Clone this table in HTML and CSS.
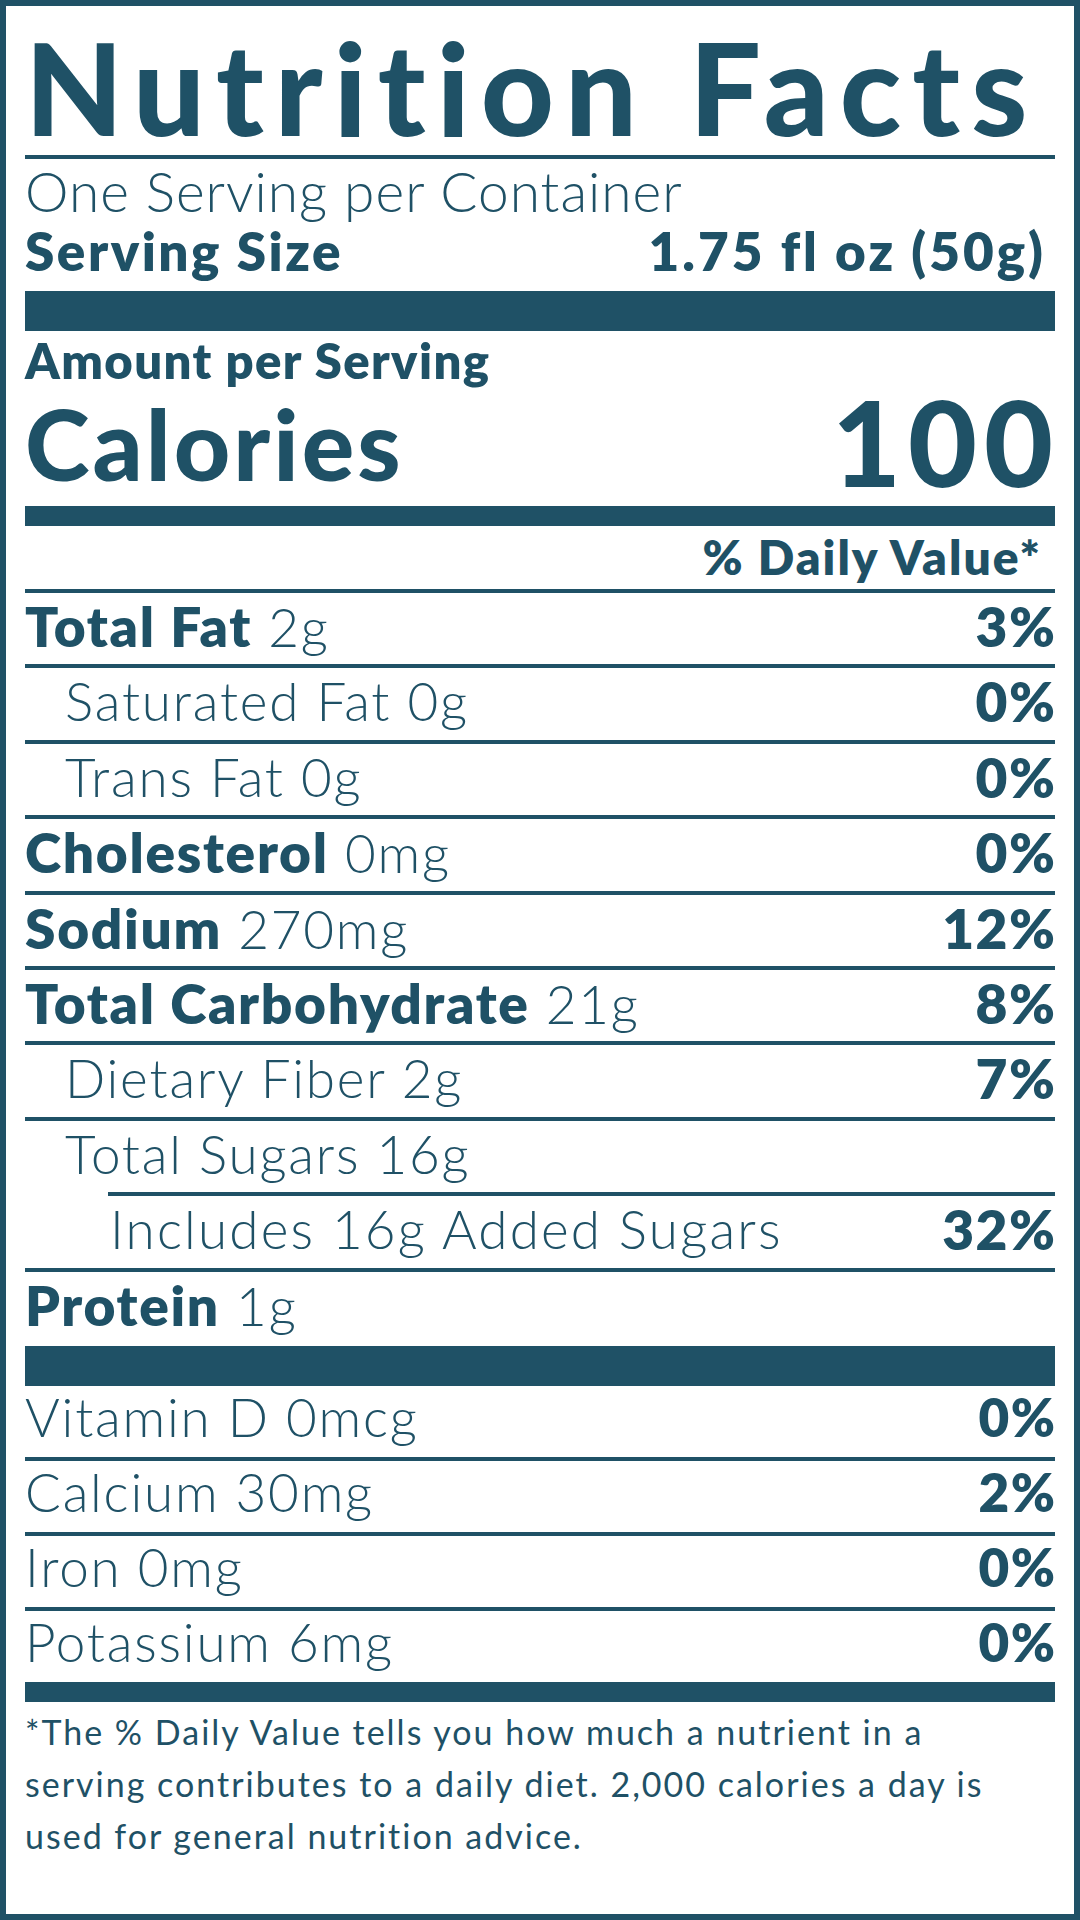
FILE: index.html
```html
<!DOCTYPE html>
<html lang="en">
<head>
<meta charset="utf-8">
<title>Nutrition Facts</title>
<link rel="stylesheet" href="styles.css">
</head>
<body>
<div class="label">
  <h1 class="title">Nutrition Facts</h1>
  <div class="servings">One Serving per Container</div>
  <div class="serving-size"><span>Serving Size</span><span class="ss-val">1.75 fl oz (50g)</span></div>
  <div class="bar bar-thick"></div>
  <div class="amount">Amount per Serving</div>
  <div class="calories"><span class="cal-label">Calories</span><span class="cal-num">100</span></div>
  <div class="bar bar-med"></div>
  <div class="dv-head">% Daily Value*</div>

  <div class="row"><span class="name"><b>Total Fat</b> 2g</span><b class="pct">3%</b></div>
  <div class="row indent"><span class="name">Saturated Fat 0g</span><b class="pct">0%</b></div>
  <div class="row indent"><span class="name">Trans Fat 0g</span><b class="pct">0%</b></div>
  <div class="row"><span class="name"><b>Cholesterol</b> 0mg</span><b class="pct">0%</b></div>
  <div class="row"><span class="name"><b>Sodium</b> 270mg</span><b class="pct">12%</b></div>
  <div class="row"><span class="name"><b>Total Carbohydrate</b> 21g</span><b class="pct">8%</b></div>
  <div class="row indent"><span class="name">Dietary Fiber 2g</span><b class="pct">7%</b></div>
  <div class="row indent no-rule"><span class="name">Total Sugars 16g</span></div>
  <div class="row added"><span class="name">Includes 16g Added Sugars</span><b class="pct">32%</b></div>
  <div class="row protein"><span class="name"><b>Protein</b> 1g</span></div>
  <div class="bar bar-thick"></div>

  <div class="vrow"><span class="name">Vitamin D 0mcg</span><b class="pct">0%</b></div>
  <div class="vrow"><span class="name">Calcium 30mg</span><b class="pct">2%</b></div>
  <div class="vrow"><span class="name">Iron 0mg</span><b class="pct">0%</b></div>
  <div class="vrow last"><span class="name">Potassium 6mg</span><b class="pct">0%</b></div>
  <div class="bar bar-med"></div>

  <p class="foot">*The % Daily Value tells you how much a nutrient in a<br>serving contributes to a daily diet. 2,000 calories a day is<br>used for general nutrition advice.</p>
</div>
</body>
</html>
```

FILE: styles.css
```css
html, body {
  margin: 0;
  padding: 0;
  background: #ffffff;
}

.label {
  box-sizing: border-box;
  width: 1080px;
  height: 1920px;
  border: 6px solid #1f5166;
  padding: 0 19px;
  color: #1f5166;
  font-family: "Lato", "Noto Sans", sans-serif;
  overflow: hidden;
}

.title {
  margin: 0;
  padding-top: 13px;
  height: 136px;
  line-height: 136px;
  font-size: 127px;
  font-weight: 900;
  letter-spacing: 11px;
  white-space: nowrap;
  border-bottom: 4px solid #1f5166;
}

.servings {
  height: 64px;
  line-height: 64px;
  font-size: 55px;
  font-weight: 300;
  letter-spacing: 1px;
  white-space: nowrap;
}

.serving-size {
  display: flex;
  justify-content: space-between;
  height: 55px;
  line-height: 55px;
  padding: 0 12px 13px 0;
  font-size: 53px;
  font-weight: 800;
  letter-spacing: 2.5px;
  white-space: nowrap;
}
.ss-val {
  letter-spacing: 3px;
  margin-right: -3px;
}

.bar {
  background: #1f5166;
}
.bar-thick { height: 40px; }
.bar-med { height: 20px; }

.amount {
  height: 58px;
  line-height: 58px;
  font-size: 49px;
  font-weight: 800;
  letter-spacing: 1.4px;
  white-space: nowrap;
}

.calories {
  display: flex;
  justify-content: space-between;
  align-items: flex-start;
  height: 117px;
  font-weight: 900;
  white-space: nowrap;
}
.cal-label {
  font-size: 98px;
  line-height: 108px;
  letter-spacing: 3px;
}
.cal-num {
  font-size: 119px;
  line-height: 104px;
  letter-spacing: 7px;
  margin-right: -5px;
}

.dv-head {
  height: 61px;
  line-height: 61px;
  padding: 0 13px 2px 0;
  text-align: right;
  font-size: 48px;
  font-weight: 800;
  letter-spacing: 2px;
  border-bottom: 4px solid #1f5166;
  white-space: nowrap;
}

.row {
  display: flex;
  justify-content: space-between;
  align-items: flex-start;
  height: 71.4px;
  border-bottom: 4px solid #1f5166;
  white-space: nowrap;
}
.row .name,
.row .pct {
  line-height: 66px;
}
.name {
  font-size: 53px;
  font-weight: 300;
  letter-spacing: 1.8px;
}
.name b {
  font-size: 55px;
  font-weight: 800;
  letter-spacing: 1.7px;
}
.pct {
  font-size: 55px;
  font-weight: 800;
  letter-spacing: 1.5px;
  margin-right: -1.5px;
}
.indent .name { padding-left: 40px; }

.row.no-rule {
  border-bottom: none;
}
.row.added {
  height: 71.4px;
  margin-left: 83px;
  border-top: 4px solid #1f5166;
  border-bottom: none;
}
.row.added .name {
  padding-left: 2px;
  letter-spacing: 2.2px;
}

.protein {
  height: 74px;
  border-top: 4px solid #1f5166;
  border-bottom: none;
}

.vrow {
  display: flex;
  justify-content: space-between;
  align-items: flex-start;
  height: 71px;
  border-bottom: 4px solid #1f5166;
  white-space: nowrap;
}
.vrow.last { border-bottom: none; }
.vrow .name,
.vrow .pct {
  line-height: 62px;
  font-size: 53px;
}
.vrow .name { font-weight: 300; }

.foot {
  margin: 0;
  padding-top: 4px;
  font-size: 34px;
  line-height: 52px;
  font-weight: 400;
  letter-spacing: 2px;
  white-space: nowrap;
}
```
